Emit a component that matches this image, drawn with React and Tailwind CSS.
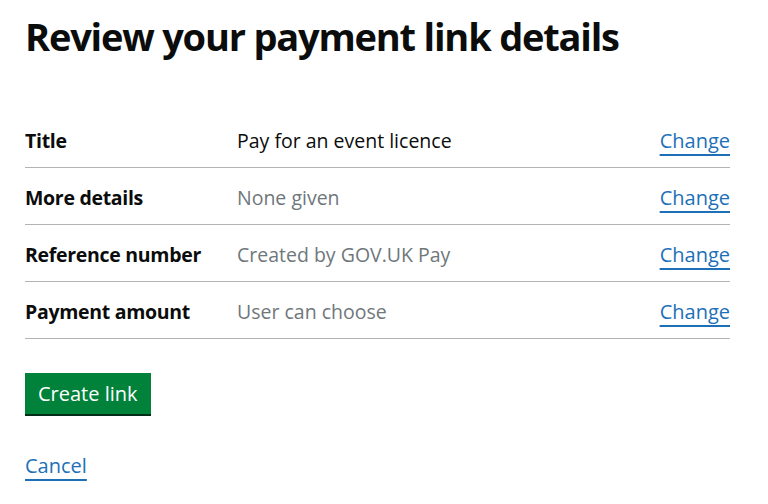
export default function App() {
  const rows = [
    { key: "Title", value: "Pay for an event licence", muted: false },
    { key: "More details", value: "None given", muted: true },
    { key: "Reference number", value: "Created by GOV.UK Pay", muted: true },
    { key: "Payment amount", value: "User can choose", muted: true },
  ];

  return (
    <div
      className="w-[768px] h-[504px] bg-white px-[25px] pt-[12px] text-[#0b0c0c] overflow-hidden"
      style={{ fontFamily: '"Open Sans", Arial, sans-serif' }}
    >
      <h1 className="text-[38px] font-bold leading-[48px] tracking-[-1.2px]">
        Review your payment link details
      </h1>

      <dl className="mt-[51px] w-[705px]">
        {rows.map((row) => (
          <div
            key={row.key}
            className="flex items-center h-[57px] pt-[4px] border-b border-[#b1b4b6] text-[19.5px]"
          >
            <dt className="w-[212px] font-bold tracking-[-0.3px]">{row.key}</dt>
            <dd className={`flex-1 ${row.muted ? "text-[#6f777b]" : ""}`}>
              {row.value}
            </dd>
            <dd>
              <a
                href="#"
                className="text-[20px] text-[#1d70b8] underline underline-offset-[6px] decoration-2"
              >
                Change
              </a>
            </dd>
          </div>
        ))}
      </dl>

      <button className="mt-[34px] h-[41px] px-[13px] bg-[#00823b] text-white text-[20px] shadow-[0_2px_0_#002d18]">
        Create link
      </button>

      <div className="mt-[37px]">
        <a
          href="#"
          className="text-[20px] text-[#1d70b8] underline underline-offset-[6px] decoration-2"
        >
          Cancel
        </a>
      </div>
    </div>
  );
}
